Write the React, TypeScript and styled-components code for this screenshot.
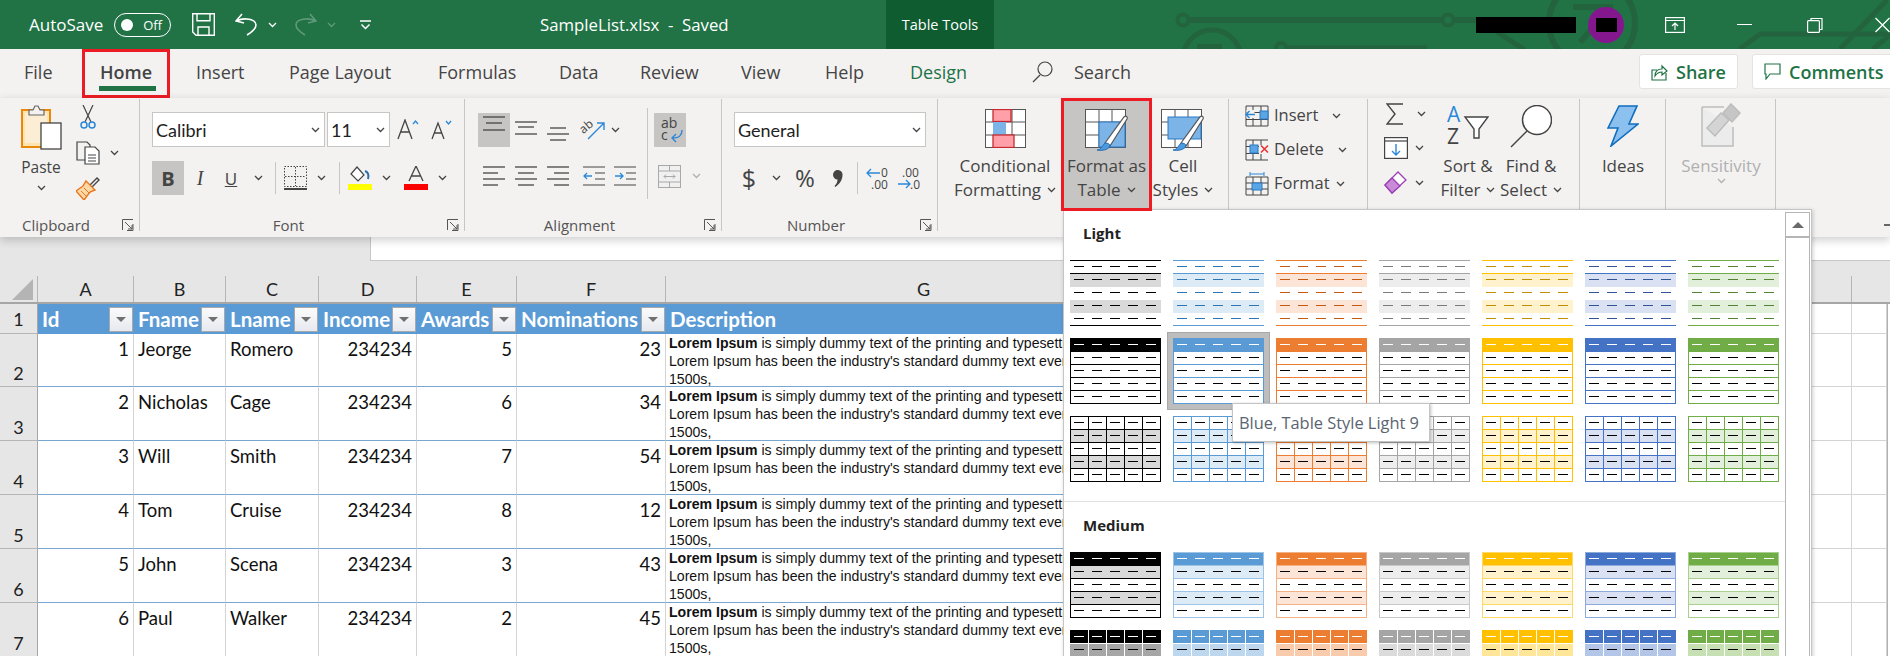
import React from "react";
import styled, { createGlobalStyle } from "styled-components";

const GlobalStyle = createGlobalStyle`
  html, body { margin: 0; padding: 0; background: #fff; overflow: hidden; }
  * { box-sizing: border-box; }
`;

const UI_FONT = `"Open Sans", "Noto Sans", sans-serif`;
const CELL_FONT = `Lato, "Open Sans", sans-serif`;
const GREEN = "#217346";
const RED = "#ed1c24";

/* ---------- small drawings ---------- */

const Chevron = ({ color = "#444" }: { color?: string }) => (
  <svg width="9" height="6" viewBox="0 0 9 6">
    <path d="M1 1l3.5 3.5L8 1" fill="none" stroke={color} strokeWidth="1.3" />
  </svg>
);

const Launcher = () => (
  <svg width="12" height="12" viewBox="0 0 12 12">
    <path d="M.5 11V.5H11M11 5v6.500H5M3 3l7 7M10 6v4H6" fill="none" stroke="#555" strokeWidth="1" />
  </svg>
);

const SaveIcon = () => (
  <svg width="23" height="23" viewBox="0 0 23 23" fill="none" stroke="#fff" strokeWidth="1.4">
    <path d="M.7.7h21.600v21.600H4L.7 19z" />
    <path d="M5 .7v7h13v-7M6 22v-8h11v8" />
  </svg>
);

const UndoIcon = ({ color }: { color: string }) => (
  <svg width="22" height="23" viewBox="0 0 22 23" fill="none" stroke={color} strokeWidth="1.6">
    <path d="M7 1L1 8l8 2M1.500 8C9 4 21 6 21 12c0 4-4 7-9 10" />
  </svg>
);

const RedoIcon = ({ color }: { color: string }) => (
  <svg width="22" height="23" viewBox="0 0 22 23" fill="none" stroke={color} strokeWidth="1.6">
    <path d="M15 1l6 7-8 2M20.500 8C13 4 1 6 1 12c0 4 4 7 9 10" />
  </svg>
);

const CustomizeIcon = () => (
  <svg width="11" height="10" viewBox="0 0 11 10" fill="none" stroke="#fff" strokeWidth="1.500">
    <path d="M0 1h11M1.500 4.500l4 4 4-4" />
  </svg>
);

const SearchIcon = () => (
  <svg width="21" height="22" viewBox="0 0 21 22" fill="none" stroke="#444" strokeWidth="1.200">
    <circle cx="13" cy="8" r="7" />
    <path d="M8 14L1 21" />
  </svg>
);

const ShareIcon = () => (
  <svg width="17" height="18" viewBox="0 0 17 18" fill="none" stroke={GREEN} strokeWidth="1.200">
    <path d="M15 10v7H1V7h5" />
    <path d="M4 13c0-5 3-7 7-7V3l5 5-5 4V9c-3 0-5 1-7 4z" />
  </svg>
);

const CommentIcon = () => (
  <svg width="17" height="17" viewBox="0 0 17 17" fill="none" stroke={GREEN} strokeWidth="1.200">
    <path d="M1 1h15v10H6l-4 5v-5H1z" />
  </svg>
);

const ScreenIcon = () => (
  <svg width="20" height="16" viewBox="0 0 20 16" fill="none" stroke="#fff" strokeWidth="1.200">
    <rect x=".6" y=".6" width="18.800" height="14.800" />
    <path d="M1 3.500h18M10 13V6M7 9l3-3 3 3" />
  </svg>
);

const RestoreIcon = () => (
  <svg width="16" height="16" viewBox="0 0 16 16" fill="none" stroke="#fff" strokeWidth="1.200">
    <rect x=".6" y="3.600" width="11.800" height="11.800" rx="1" />
    <path d="M4 3.500V1.500h11v11h-2.500" />
  </svg>
);

const CloseIcon = () => (
  <svg width="15" height="16" viewBox="0 0 15 16" fill="none" stroke="#fff" strokeWidth="1.300">
    <path d="M.5 1l14 14M14.500 1l-14 14" />
  </svg>
);

const PasteIcon = () => (
  <svg width="41" height="45" viewBox="0 0 41 45">
    <rect x="1" y="5" width="28" height="37" fill="#fde3ad" stroke="#e8890c" strokeWidth="2" />
    <rect x="4" y="8" width="22" height="30" fill="#fbeed4" />
    <path d="M8 10V5h4l2-4h3l2 4h4v5z" fill="#f3f2f1" stroke="#666" strokeWidth="1.200" />
    <rect x="20" y="18" width="20" height="26" fill="#fff" stroke="#444" strokeWidth="1.300" />
  </svg>
);

const ScissorsIcon = () => (
  <svg width="16" height="24" viewBox="0 0 16 24" fill="none">
    <path d="M3 0l8 17M13 0L5 17" stroke="#444" strokeWidth="1.200" />
    <circle cx="4" cy="20" r="3" stroke="#2b88d8" strokeWidth="1.500" />
    <circle cx="12" cy="20" r="3" stroke="#2b88d8" strokeWidth="1.500" />
  </svg>
);

const CopyIcon = () => (
  <svg width="24" height="24" viewBox="0 0 24 24" fill="#f3f2f1" stroke="#444" strokeWidth="1.200">
    <path d="M1 1h10l3 3v15H1z" />
    <path d="M9 6h10l4 4v13H9z" fill="#fff" />
    <path d="M12 14h8M12 17h8M12 20h8" />
  </svg>
);

const BrushIcon = () => (
  <svg width="24" height="23" viewBox="0 0 24 23" fill="none">
    <path d="M14 8l7-7 2 2-7 7" stroke="#444" strokeWidth="1.400" />
    <path d="M10 4l9 9-5 2-6 8-8-9 7-5z" fill="#fbd9a7" stroke="#e8761c" strokeWidth="1.400" />
    <path d="M5 14l5 5M8 11l5 5" stroke="#e8761c" strokeWidth="1" />
  </svg>
);

const GrowFont = ({ up }: { up: boolean }) => (
  <svg width="22" height="21" viewBox="0 0 22 21" fill="none">
    <path d={up ? "M1 20L8 1l7 19M4 13h8" : "M1 20L7 4l6 16M3.500 14h7"} stroke="#444" strokeWidth="1.300" />
    <path d={up ? "M16 5l2.500-3L21 5" : "M15 2l2.500 3L20 2"} stroke="#2b88d8" strokeWidth="1.300" />
  </svg>
);

const BordersIcon = () => (
  <svg width="23" height="24" viewBox="0 0 23 24" fill="none" stroke="#444">
    <rect x=".5" y=".5" width="22" height="20" strokeDasharray="1.500 1.500" />
    <path d="M11.500 1v19M1 10.500h21" strokeDasharray="1.500 1.500" />
    <path d="M0 23h23" strokeWidth="2" />
  </svg>
);

const FillIcon = () => (
  <svg width="24" height="24" viewBox="0 0 24 24" fill="none">
    <path d="M9 1l7 8-6 6-7-7z" fill="#fff" stroke="#444" strokeWidth="1.200" />
    <path d="M17 5c3 1 4 4 3 8" stroke="#2b6cb0" strokeWidth="2" />
    <rect y="18" width="24" height="6" fill="#ffff00" />
  </svg>
);

const FontColorIcon = () => (
  <svg width="24" height="24" viewBox="0 0 24 24" fill="none">
    <path d="M5 15L12 0l7 15M7.500 10h9" stroke="#444" strokeWidth="1.300" />
    <rect y="18" width="24" height="6" fill="#ff0000" />
  </svg>
);

const LinesIcon = ({ rows }: { rows: [number, number, number][] }) => (
  <svg width="22" height="34" viewBox="0 0 22 34" fill="none" stroke="#444" strokeWidth="1.300">
    {rows.map(([x, y, w]) => (
      <path key={`${x}-${y}`} d={`M${x} ${y}h${w}`} />
    ))}
  </svg>
);

const OrientationIcon = () => (
  <svg width="25" height="24" viewBox="0 0 25 24" fill="none">
    <text x="0" y="13" fontFamily={UI_FONT} fontSize="12" fill="#444" transform="rotate(-40 6 10)">ab</text>
    <path d="M8 21L24 5M17 5h7v7" stroke="#2b88d8" strokeWidth="1.400" />
  </svg>
);

const IndentIcon = ({ out }: { out: boolean }) => (
  <svg width="22" height="20" viewBox="0 0 22 20" fill="none">
    <path d="M0 1h22M12 7h10M12 13h10M0 19h22" stroke="#444" strokeWidth="1.200" />
    <path d={out ? "M9 10H1M4 7l-3 3 3 3" : "M1 10h8M6 7l3 3-3 3"} stroke="#2b88d8" strokeWidth="1.300" />
  </svg>
);

const WrapIcon = () => (
  <svg width="32" height="34" viewBox="0 0 32 34" fill="none">
    <text x="7" y="15" fontFamily={UI_FONT} fontSize="14" fill="#444">ab</text>
    <text x="7" y="27" fontFamily={UI_FONT} fontSize="14" fill="#444">c</text>
    <path d="M28 17c0 6-3 8-10 8M22 21l-4 4 4 4" stroke="#2b88d8" strokeWidth="1.400" />
  </svg>
);

const MergeIcon = () => (
  <svg width="23" height="23" viewBox="0 0 23 23" fill="#f0f0f0" stroke="#a8a8a8">
    <rect x=".5" y=".5" width="22" height="22" />
    <path d="M1 6h21M1 17h21M11.500 1v5M11.500 17v5M6 11.500h11M8 9.500l-2 2 2 2M15 9.500l2 2-2 2" fill="none" />
  </svg>
);

const CommaIcon = () => (
  <svg width="10" height="17" viewBox="0 0 10 17">
    <path d="M5 0a4.500 4.500 0 0 1 4.500 5c0 5-3 9-7 12l-1-1c2-2 3-4 3-6.500A4.500 4.500 0 0 1 5 0z" fill="#444" />
  </svg>
);

const DecimalIcon = ({ more }: { more: boolean }) => (
  <svg width="24" height="24" viewBox="0 0 24 24" fill="none">
    <text x={more ? 5 : 15} y="11" fontFamily={UI_FONT} fontSize="12" fill="#444">{more ? ".00" : "0"}</text>
    <text x={more ? 13 : 5} y="23" fontFamily={UI_FONT} fontSize="12" fill="#444">{more ? ".0" : ".00"}</text>
    <path d={more ? "M1 18h12M9 14l4 4-4 4" : "M14 7H1M5 3L1 7l4 4"} stroke="#2b88d8" strokeWidth="1.300" />
  </svg>
);

const TableBase = () => (
  <>
    <rect x=".5" y=".5" width="40" height="38" fill="#fff" stroke="#555" />
    <path d="M.5 13h40M.5 26h40M14 .5v38M27 .5v38" stroke="#555" />
  </>
);

const ConditionalIcon = () => (
  <svg width="41" height="39" viewBox="0 0 41 39">
    <TableBase />
    <rect x="8" y=".5" width="18" height="12" fill="#ffa0a8" stroke="#c8282f" strokeWidth="1.300" />
    <rect x="8" y="13" width="13" height="13" fill="#7cb4e8" />
    <rect x="8" y="26" width="21" height="12.500" fill="#ffa0a8" stroke="#c8282f" strokeWidth="1.300" />
  </svg>
);

const PaintBrush = () => (
  <>
    <path d="M20 34L39 8c2-2 4 0 3 2L25 37z" fill="#fff" stroke="#555" strokeWidth="1.200" />
    <path d="M12 41c4 0 5-4 8-7 3 0 5 1 5 3-2 4-8 5-13 4z" fill="#4a9be0" stroke="#2b6cb0" />
  </>
);

const FormatTableIcon = () => (
  <svg width="44" height="42" viewBox="0 0 44 42">
    <TableBase />
    <rect x="14" y="13" width="26" height="25" fill="#7cb4e8" stroke="#2b78c4" />
    <PaintBrush />
  </svg>
);

const CellStylesIcon = () => (
  <svg width="44" height="42" viewBox="0 0 44 42">
    <TableBase />
    <rect x="7" y="8" width="33" height="22" fill="#7cb4e8" stroke="#2b78c4" />
    <PaintBrush />
  </svg>
);

const InsertCellsIcon = () => (
  <svg width="24" height="22" viewBox="0 0 24 22" fill="none">
    <path d="M1 1h22v20H1zM8 1v20M16 1v20M1 7.500h22M1 14.500h22" stroke="#444" />
    <rect x="1.500" y="5" width="8" height="8" fill="#f3f2f1" />
    <rect x="15" y="6" width="8" height="8" fill="#5aa5e6" stroke="#2b78c4" />
    <path d="M10 9.500H1M4.500 6L1 9.500 4.500 13" stroke="#2b88d8" strokeWidth="1.500" />
  </svg>
);

const DeleteCellsIcon = () => (
  <svg width="24" height="22" viewBox="0 0 24 22" fill="none">
    <path d="M23 1H1v20h22M1 7.500h13M1 14.500h13M8 1v20M16 1v5M16 15v6" stroke="#444" />
    <rect x="5" y="6" width="8" height="8" fill="#5aa5e6" stroke="#2b78c4" />
    <path d="M16 6.500l7 7M23 6.500l-7 7" stroke="#e83030" strokeWidth="1.500" />
  </svg>
);

const FormatCellsIcon = () => (
  <svg width="24" height="24" viewBox="0 0 24 24" fill="none">
    <path d="M1 5h22v18H1zM8 5v18M16 5v18M1 11h22M1 17h22" stroke="#444" />
    <rect x="7" y="11" width="10" height="7" fill="#5aa5e6" stroke="#2b78c4" />
    <path d="M5 2h14M5 0v4M19 0v4" stroke="#2b88d8" />
  </svg>
);

const SigmaIcon = () => (
  <svg width="18" height="22" viewBox="0 0 18 22" fill="none" stroke="#444" strokeWidth="1.400">
    <path d="M17 1H1l8 10-8 10h16" />
  </svg>
);

const FillDownIcon = () => (
  <svg width="24" height="22" viewBox="0 0 24 22" fill="#fff" stroke="#444" strokeWidth="1.200">
    <rect x=".6" y=".6" width="22.800" height="20.800" />
    <path d="M1 4h22" />
    <path d="M12 7v11M8 14l4 4 4-4" stroke="#2b88d8" strokeWidth="1.400" fill="none" />
  </svg>
);

const EraserIcon = () => (
  <svg width="23" height="23" viewBox="0 0 23 23">
    <path d="M14 1l8 8-14 13-7-8z" fill="#fff" stroke="#9b3fb5" strokeWidth="1.300" />
    <path d="M1 14l7-7 8 8-8 7z" fill="#c98bd8" stroke="#9b3fb5" strokeWidth="1.300" />
  </svg>
);

const SortFilterIcon = () => (
  <svg width="42" height="40" viewBox="0 0 42 40" fill="none">
    <text x="0" y="17" fontFamily={UI_FONT} fontSize="21" fill="#2b88d8">A</text>
    <text x="0" y="39" fontFamily={UI_FONT} fontSize="21" fill="#444">Z</text>
    <path d="M18 12h23l-9 12v9h-5v-9z" stroke="#444" strokeWidth="1.400" fill="#fff" />
  </svg>
);

const FindIcon = () => (
  <svg width="42" height="43" viewBox="0 0 42 43" fill="none" stroke="#444" strokeWidth="1.500">
    <circle cx="27" cy="15" r="14.500" fill="#fff" />
    <path d="M17 26L1 42" />
  </svg>
);

const BoltIcon = () => (
  <svg width="32" height="42" viewBox="0 0 32 42">
    <path d="M12 1h18l-8 18h9L4 41l7-18H1z" fill="#8cc0ef" stroke="#106ebe" strokeWidth="1.600" />
  </svg>
);

const SensitivityIcon = () => (
  <svg width="40" height="44" viewBox="0 0 40 44" fill="none" stroke="#bdbdbd" strokeWidth="1.500">
    <path d="M1 4h22M1 4v39h31V24" fill="#ececec" />
    <path d="M6 25l14-15 8 7-14 16z" fill="#d4d4d4" />
    <path d="M22 10l8-9 9 9-8 9z" fill="#c6c6c6" />
  </svg>
);

const TitleCircuit = () => (
  <svg width="740" height="49" viewBox="0 0 740 49" fill="none" stroke="#23643f" strokeWidth="6">
    <path d="M38 20h255M303 20h27" />
    <circle cx="33" cy="20" r="5.500" strokeWidth="4" />
    <circle cx="298" cy="20" r="5.500" strokeWidth="4" />
    <circle cx="62" cy="59" r="29" strokeWidth="5" />
    <rect x="47" y="44" width="25" height="8" fill="#23643f" stroke="none" />
    <path d="M136 48h141" strokeWidth="5" />
    <circle cx="131" cy="48" r="5" strokeWidth="4" />
    <path d="M347 32l28 18" strokeWidth="5" />
    <circle cx="442" cy="23" r="43" />
    <path d="M423 7h40M430 42l25-27" />
    <path d="M590 49l20-15h130M737 0l-47 49M740 35l-17 14" strokeWidth="5" />
  </svg>
);

/* ---------- title bar ---------- */

const Page = styled.div`
  position: relative;
  width: 1890px;
  height: 656px;
  overflow: hidden;
  background: #fff;
  font-family: ${UI_FONT};
  color: #444;
`;

const TitleBar = styled.header`
  position: relative;
  display: flex;
  align-items: center;
  height: 49px;
  background: ${GREEN};
  color: #fff;
  overflow: hidden;
`;

const CircuitLayer = styled.div`
  position: absolute;
  left: 1150px;
  top: 0;
  line-height: 0;
`;

const QuickAccess = styled.div`
  position: relative;
  display: flex;
  align-items: center;
  width: 540px;
  padding-left: 29px;
`;

const AutoSaveLabel = styled.span`
  width: 85px;
  font-size: 17px;
`;

const Toggle = styled.div`
  display: flex;
  align-items: center;
  justify-content: space-between;
  width: 57px;
  height: 24px;
  padding: 0 8px 0 6px;
  border: 1px solid #fff;
  border-radius: 12px;
  font-size: 13px;
`;

const ToggleKnob = styled.span`
  width: 12px;
  height: 12px;
  border-radius: 50%;
  background: #fff;
`;

const QuickItem = styled.span<{ $ml: number }>`
  display: flex;
  margin-left: ${(p) => p.$ml}px;
`;

const DocTitle = styled.div`
  position: relative;
  width: 346px;
  font-size: 16.800px;
  white-space: pre;
`;

const ContextTab = styled.div`
  position: relative;
  display: flex;
  align-items: center;
  justify-content: center;
  width: 108px;
  height: 49px;
  background: #0f5c31;
  font-size: 14.500px;
`;

const AccountArea = styled.div`
  position: relative;
  display: flex;
  align-items: center;
  margin-left: auto;
`;

const RedactedName = styled.div`
  width: 100px;
  height: 16px;
  background: #000;
`;

const Avatar = styled.div`
  display: flex;
  align-items: center;
  justify-content: center;
  width: 36px;
  height: 36px;
  margin-left: 12px;
  border-radius: 50%;
  background: #84178e;
`;

const RedactedInitials = styled.div`
  width: 21px;
  height: 14px;
  background: #000;
`;

const WindowButtons = styled.div`
  display: flex;
  align-items: center;
  margin-left: 41px;
`;

const WindowButton = styled.span<{ $w: number }>`
  display: flex;
  align-items: center;
  width: ${(p) => p.$w}px;
`;

const MinimizeLine = styled.span`
  width: 15px;
  height: 1.500px;
  background: #fff;
`;

/* ---------- tab row ---------- */

const TabRow = styled.nav`
  display: flex;
  align-items: center;
  height: 49px;
  padding: 0 0 3px 24px;
  background: #f3f2f1;
  font-size: 18px;
  line-height: 24px;
  overflow: hidden;
`;

const Tab = styled.div<{ $w: number; $active?: boolean; $accent?: boolean }>`
  position: relative;
  flex: none;
  width: ${(p) => p.$w}px;
  color: ${(p) => (p.$accent ? GREEN : "#444")};
  font-weight: ${(p) => (p.$active ? 600 : 400)};
`;

const ActiveMark = styled.span`
  position: absolute;
  left: -18px;
  top: -11px;
  width: 88px;
  height: 49px;
  border: 3px solid ${RED};
`;

const ActiveBar = styled.span`
  position: absolute;
  left: -1px;
  top: 26px;
  width: 57px;
  height: 5px;
  background: ${GREEN};
`;

const SearchBox = styled.div`
  display: flex;
  align-items: center;
  gap: 21px;
  margin-left: 2px;
`;

const TabActions = styled.div`
  display: flex;
  gap: 14px;
  width: 251px;
  margin: -1px 0 0 auto;
  overflow: hidden;
`;

const ActionButton = styled.div<{ $w: number }>`
  display: flex;
  flex: none;
  align-items: center;
  gap: 8px;
  width: ${(p) => p.$w}px;
  height: 35px;
  padding-left: 11px;
  border: 1px solid #e4e3e1;
  border-radius: 3px;
  background: #fff;
  color: ${GREEN};
  font-size: 18px;
  font-weight: 600;
`;

/* ---------- ribbon ---------- */

const Ribbon = styled.section`
  position: relative;
  display: flex;
  height: 139px;
  padding-top: 1px;
  background: #f3f2f1;
  box-shadow: 0 3px 9px rgba(0, 0, 0, 0.2);
`;

const CollapseMark = styled.span`
  position: absolute;
  right: 0;
  top: 126px;
  width: 6px;
  height: 2px;
  background: #666;
`;

const Group = styled.div<{ $w: number }>`
  position: relative;
  display: flex;
  flex: none;
  flex-direction: column;
  width: ${(p) => p.$w}px;
  height: 132px;
  border-right: 1px solid #c8c6c4;
`;

const GroupBody = styled.div<{ $pad: string; $row?: boolean }>`
  display: flex;
  flex: 1;
  flex-direction: ${(p) => (p.$row ? "row" : "column")};
  min-height: 0;
  padding: ${(p) => p.$pad};
`;

const GroupLabel = styled.div<{ $launcher?: boolean }>`
  height: 14px;
  margin-bottom: -1px;
  padding-right: ${(p) => (p.$launcher ? 27 : 0)}px;
  color: #555;
  font-size: 15px;
  line-height: 14px;
  text-align: center;
`;

const LauncherSpot = styled.span`
  position: absolute;
  right: 5px;
  bottom: 0;
  display: flex;
`;

const PasteColumn = styled.div`
  display: flex;
  flex-direction: column;
  align-items: center;
  width: 44px;
  font-size: 15.500px;
`;

const PasteText = styled.span`
  margin-top: 7px;
  margin-bottom: 8px;
  line-height: 20px;
`;

const ClipboardSide = styled.div`
  display: flex;
  flex-direction: column;
  gap: 12px;
  margin-left: 13px;
`;

const InlineTool = styled.div<{ $gap?: number; $ml?: number }>`
  display: flex;
  align-items: center;
  gap: ${(p) => p.$gap ?? 10}px;
  margin-left: ${(p) => p.$ml ?? 0}px;
`;

const ToolRow = styled.div<{ $gap?: number; $mt?: number }>`
  display: flex;
  align-items: center;
  gap: ${(p) => p.$gap ?? 0}px;
  margin-top: ${(p) => p.$mt ?? 0}px;
`;

const Combo = styled.div<{ $w: number }>`
  display: flex;
  align-items: center;
  justify-content: space-between;
  width: ${(p) => p.$w}px;
  height: 35px;
  padding: 0 4px 0 3px;
  border: 1px solid #c8c6c4;
  background: #fff;
  color: #222;
  font-family: ${CELL_FONT};
  font-size: 18px;
`;

const ToolButton = styled.div<{ $w: number; $on?: boolean; $ml?: number }>`
  display: flex;
  flex: none;
  align-items: center;
  justify-content: center;
  width: ${(p) => p.$w}px;
  height: 34px;
  margin-left: ${(p) => p.$ml ?? 0}px;
  background: ${(p) => (p.$on ? "#c6c5c3" : "transparent")};
  color: #444;
`;

const BoldGlyph = styled.span`
  font-family: ${UI_FONT};
  font-size: 20px;
  font-weight: 700;
`;

const ItalicGlyph = styled.span`
  font-family: "Liberation Serif", serif;
  font-size: 20px;
  font-style: italic;
`;

const UnderGlyph = styled.span`
  font-size: 17px;
  text-decoration: underline;
`;

const RowDivider = styled.span<{ $h: number; $mx?: number }>`
  flex: none;
  width: 1px;
  height: ${(p) => p.$h}px;
  margin: 0 ${(p) => p.$mx ?? 0}px;
  background: #c8c6c4;
`;

const AlignColumn = styled.div<{ $w: number }>`
  display: flex;
  flex: none;
  flex-direction: column;
  gap: 12px;
  width: ${(p) => p.$w}px;
`;

const AlignDivider = styled(RowDivider)`
  margin: -5px 6px 0 0;
`;

const NumberGlyph = styled.span<{ $size: number }>`
  font-size: ${(p) => p.$size}px;
  line-height: 34px;
`;

const BigTool = styled.div<{ $w: number; $boxed?: boolean; $dim?: boolean }>`
  position: relative;
  z-index: ${(p) => (p.$boxed ? 6 : "auto")};
  display: flex;
  flex: none;
  flex-direction: column;
  align-items: center;
  width: ${(p) => p.$w}px;
  height: ${(p) => (p.$boxed ? 113 : 110)}px;
  margin-top: ${(p) => (p.$boxed ? -1 : 0)}px;
  padding-top: ${(p) => (p.$boxed ? 4 : 6)}px;
  border: ${(p) => (p.$boxed ? `3px solid ${RED}` : "none")};
  background: ${(p) => (p.$boxed ? "#c6c5c3" : "transparent")};
  color: ${(p) => (p.$dim ? "#b0b0b0" : "#444")};
  font-size: 17px;
  line-height: 24px;
`;

const BigIconSlot = styled.div<{ $top?: number }>`
  display: flex;
  align-items: flex-start;
  justify-content: center;
  height: ${(p) => 49 - (p.$top ?? 0)}px;
  margin-top: ${(p) => p.$top ?? 0}px;
`;

const BigLine = styled.div`
  display: flex;
  align-items: center;
  gap: 6px;
  white-space: nowrap;
`;

const StackColumn = styled.div`
  display: flex;
  flex: none;
  flex-direction: column;
  gap: 12px;
  width: 56px;
  padding-top: 4px;
`;

const CellsRow = styled.div`
  display: flex;
  align-items: center;
  height: 34px;
  font-size: 16.500px;
  line-height: 20px;
`;

const CellsIconSlot = styled.span`
  display: flex;
  width: 24px;
`;

const CellsText = styled.span<{ $w: number }>`
  width: ${(p) => p.$w}px;
  margin-left: 5px;
  margin-top: -2px;
`;

/* ---------- sheet ---------- */

const COLUMNS = "38px 96px 92px 93px 98px 100px 149px 516px 670px 35px 1fr";

const FormulaArea = styled.div`
  display: flex;
  height: 24px;
  background: #e6e6e6;
`;

const FormulaInput = styled.div`
  flex: 1;
  margin-left: 370px;
  border-left: 1px solid #c6c6c6;
  border-bottom: 1px solid #c6c6c6;
  background: #fff;
`;

const HeaderGap = styled.div`
  height: 15px;
  background: #e6e6e6;
`;

const ColumnHeader = styled.div`
  display: grid;
  grid-template-columns: ${COLUMNS};
  height: 28px;
  background: #e6e6e6;
  border-bottom: 2px solid #a6a6a6;
  font-family: ${CELL_FONT};
  font-size: 18px;
  line-height: 26px;
  color: #222;
  text-align: center;
`;

const ColumnName = styled.div`
  border-right: 1px solid #b6b6b6;
  &:nth-last-child(-n + 2) { border-right: none; }
`;

const CornerWrap = styled.div`
  display: flex;
  align-items: flex-end;
  justify-content: flex-end;
  padding: 0 4px 2px 0;
  border-right: 1px solid #b6b6b6;
`;

const CornerMark = styled.span`
  width: 21px;
  height: 21px;
  background: #b4b4b4;
  clip-path: polygon(100% 0, 100% 100%, 0 100%);
`;

const SheetRow = styled.div<{ $h: number }>`
  display: grid;
  grid-template-columns: ${COLUMNS};
  height: ${(p) => p.$h}px;
`;

const RowLabel = styled.div<{ $middle?: boolean }>`
  display: flex;
  align-items: ${(p) => (p.$middle ? "center" : "flex-end")};
  justify-content: center;
  padding-bottom: ${(p) => (p.$middle ? 0 : 1)}px;
  border-right: 1px solid #a6a6a6;
  border-bottom: 1px solid #b6b6b6;
  background: #e6e6e6;
  color: #222;
  font-family: ${CELL_FONT};
  font-size: 18px;
  line-height: 24px;
`;

const HeadCell = styled.div`
  display: flex;
  align-items: center;
  justify-content: space-between;
  padding: 0 1px 0 4px;
  background: #5b9bd5;
  color: #fff;
  font-family: ${CELL_FONT};
  font-size: 20.500px;
  font-weight: 700;
  overflow: hidden;
  white-space: nowrap;
`;

const FilterButton = styled.span`
  display: flex;
  flex: none;
  align-items: center;
  justify-content: center;
  width: 24px;
  height: 25px;
  border: 1px solid #a9a9a9;
  background: linear-gradient(#fbfbfc, #e6e9ef);
  &::after {
    content: "";
    border-top: 5px solid #707070;
    border-left: 5px solid transparent;
    border-right: 5px solid transparent;
  }
`;

const DataCell = styled.div<{ $right?: boolean; $plain?: boolean }>`
  padding: 0 4px;
  border-right: 1px solid #d4d4d4;
  border-bottom: 1px solid ${(p) => (p.$plain ? "#d4d4d4" : "#78a7d2")};
  background: #fff;
  color: #111;
  font-family: ${CELL_FONT};
  font-size: 18.500px;
  line-height: 30px;
  text-align: ${(p) => (p.$right ? "right" : "left")};
  overflow: hidden;
  white-space: nowrap;
`;

const EdgeCell = styled.div`
  border-left: 1px solid #b0b0b0;
  background: #fff;
`;

const DescriptionCell = styled(DataCell)`
  padding: 0 0 0 3px;
  font-family: "Liberation Sans", Arial, sans-serif;
  font-size: 14.100px;
  line-height: 18px;
`;

/* ---------- styles dropdown ---------- */

const Gallery = styled.aside`
  position: absolute;
  left: 1063px;
  top: 209px;
  z-index: 5;
  display: flex;
  width: 749px;
  height: 460px;
  border: 1px solid #c6c6c6;
  background: #fff;
  box-shadow: 1px 1px 4px rgba(0, 0, 0, 0.2);
`;

const GalleryMain = styled.div`
  width: 721px;
`;

const SectionTitle = styled.div`
  height: 50px;
  padding-left: 19px;
  color: #222;
  font-size: 15px;
  font-weight: 700;
  line-height: 46px;
`;

const SwatchGrid = styled.div`
  display: grid;
  grid-template-columns: repeat(7, 91px);
  gap: 12px;
  padding-left: 6px;
`;

const SwatchBox = styled.div<{ $picked?: boolean }>`
  width: 91px;
  height: 66px;
  line-height: 0;
  box-shadow: ${(p) => (p.$picked ? "0 0 0 5px #bdbdbd, 0 0 0 6px #a8a8a8" : "none")};
`;

const SectionDivider = styled.div`
  height: 1px;
  margin-top: 19px;
  background: #e1e1e1;
`;

const ScrollTrack = styled.div`
  width: 25px;
  margin-top: 2px;
  border-left: 1px solid #b5b5b5;
  border-right: 1px solid #b5b5b5;
  border-top: 1px solid #b5b5b5;
`;

const ScrollUp = styled.div`
  display: flex;
  align-items: center;
  justify-content: center;
  height: 25px;
  border-bottom: 2px solid #b5b5b5;
  &::after {
    content: "";
    border-bottom: 6px solid #6a6a6a;
    border-left: 6px solid transparent;
    border-right: 6px solid transparent;
  }
`;

const Tooltip = styled.div`
  position: absolute;
  left: 168px;
  top: 193px;
  z-index: 2;
  display: flex;
  align-items: center;
  justify-content: center;
  width: 198px;
  height: 39px;
  padding-right: 4px;
  border: 1px solid #c4c4c4;
  background: #fff;
  box-shadow: 1px 1px 3px rgba(0, 0, 0, 0.25);
  color: #5a6470;
  font-size: 16.400px;
  white-space: nowrap;
`;

/* ---------- data ---------- */

type Tone = { main: string; soft: string; strong: string; band: string; dash: string };

const TONES: Tone[] = [
  { main: "#000000", soft: "#000000", strong: "#a6a6a6", band: "#d9d9d9", dash: "#000000" },
  { main: "#5b9bd5", soft: "#9dc3e6", strong: "#bdd7ee", band: "#ddebf7", dash: "#2e75b6" },
  { main: "#ed7d31", soft: "#f4b183", strong: "#f8cbad", band: "#fce4d6", dash: "#c65911" },
  { main: "#a5a5a5", soft: "#c9c9c9", strong: "#dbdbdb", band: "#ededed", dash: "#7b7b7b" },
  { main: "#ffc000", soft: "#ffd966", strong: "#ffe699", band: "#fff2cc", dash: "#bf8f00" },
  { main: "#4472c4", soft: "#8eaadb", strong: "#b4c6e7", band: "#d9e1f2", dash: "#305496" },
  { main: "#70ad47", soft: "#a9d08e", strong: "#c6e0b4", band: "#e2efda", dash: "#548235" },
];

type SwatchKind = "lines" | "boxed" | "grid" | "medium" | "solid";

const ROW_TOPS = [0, 14, 27, 40, 53, 66];
const COL_LEFTS = [0, 18, 36, 54, 72, 91];
const INDEXES = [0, 1, 2, 3, 4];

const Swatch = ({ kind, tone }: { kind: SwatchKind; tone: Tone }) => {
  const lineColor = kind === "medium" ? tone.soft : tone.main;
  const isBand = (r: number) => r === 1 || r === 3;
  const dashColor = (r: number) => {
    if (kind === "lines") return tone.dash;
    if ((kind === "boxed" || kind === "medium" || kind === "solid") && r === 0) return "#fff";
    return "#000";
  };
  return (
    <svg width="91" height="66" viewBox="0 0 91 66" shapeRendering="crispEdges">
      {INDEXES.map((r) => {
        let fill = "#fff";
        if (r === 0 && kind !== "lines" && kind !== "grid") fill = tone.main;
        else if (kind === "solid") fill = isBand(r) ? tone.strong : tone.band;
        else if (isBand(r) && kind !== "boxed") fill = tone.band;
        return <rect key={r} x="0" y={ROW_TOPS[r]} width="91" height={ROW_TOPS[r + 1] - ROW_TOPS[r]} fill={fill} />;
      })}
      {kind === "lines" && (
        <path d="M0 .5h91M0 13.500h91M0 65.500h91" stroke={tone.main} fill="none" />
      )}
      {(kind === "boxed" || kind === "medium" || kind === "grid") && (
        <>
          <path
            d={ROW_TOPS.slice(1, 5).map((y) => `M0 ${y - 0.5}h91`).join("")}
            stroke={lineColor}
            fill="none"
          />
          <rect x=".5" y=".5" width="90" height="65" stroke={lineColor} fill="none" />
        </>
      )}
      {kind === "grid" && (
        <path d={COL_LEFTS.slice(1, 5).map((x) => `M${x + 0.5} 0v66`).join("")} stroke={lineColor} fill="none" />
      )}
      {kind === "solid" && (
        <path
          d={
            COL_LEFTS.slice(1, 5).map((x) => `M${x + 0.5} 0v66`).join("") +
            ROW_TOPS.slice(1, 5).map((y) => `M0 ${y - 0.5}h91`).join("")
          }
          stroke="#fff"
          fill="none"
        />
      )}
      {INDEXES.map((r) =>
        INDEXES.map((c) => (
          <rect key={`${r}-${c}`} x={4 + 18 * c} y={6 + 13 * r} width="10" height="1" fill={dashColor(r)} />
        ))
      )}
    </svg>
  );
};

const TABS = [
  { name: "File", w: 76 },
  { name: "Home", w: 96, active: true },
  { name: "Insert", w: 93 },
  { name: "Page Layout", w: 149 },
  { name: "Formulas", w: 121 },
  { name: "Data", w: 81 },
  { name: "Review", w: 101 },
  { name: "View", w: 84 },
  { name: "Help", w: 85 },
  { name: "Design", w: 120, accent: true },
];

const HEAD = ["Id", "Fname", "Lname", "Income", "Awards", "Nominations"];

const PEOPLE = [
  { id: 1, first: "Jeorge", last: "Romero", awards: 5, noms: 23, h: 53 },
  { id: 2, first: "Nicholas", last: "Cage", awards: 6, noms: 34, h: 54 },
  { id: 3, first: "Will", last: "Smith", awards: 7, noms: 54, h: 54 },
  { id: 4, first: "Tom", last: "Cruise", awards: 8, noms: 12, h: 54 },
  { id: 5, first: "John", last: "Scena", awards: 3, noms: 43, h: 54 },
  { id: 6, first: "Paul", last: "Walker", awards: 2, noms: 45, h: 54 },
];

const LIGHT_KINDS: SwatchKind[] = ["lines", "boxed", "grid"];
const MEDIUM_KINDS: SwatchKind[] = ["medium", "solid"];

const App = () => (
  <Page>
    <GlobalStyle />
    <TitleBar>
      <CircuitLayer>
        <TitleCircuit />
      </CircuitLayer>
      <QuickAccess>
        <AutoSaveLabel>AutoSave</AutoSaveLabel>
        <Toggle>
          <ToggleKnob />
          Off
        </Toggle>
        <QuickItem $ml={21}><SaveIcon /></QuickItem>
        <QuickItem $ml={20}><UndoIcon color="#fff" /></QuickItem>
        <QuickItem $ml={11}><Chevron color="#fff" /></QuickItem>
        <QuickItem $ml={18}><RedoIcon color="#5f9a7a" /></QuickItem>
        <QuickItem $ml={10}><Chevron color="#5f9a7a" /></QuickItem>
        <QuickItem $ml={24}><CustomizeIcon /></QuickItem>
      </QuickAccess>
      <DocTitle>SampleList.xlsx  -  Saved</DocTitle>
      <ContextTab>Table Tools</ContextTab>
      <AccountArea>
        <RedactedName />
        <Avatar><RedactedInitials /></Avatar>
        <WindowButtons>
          <WindowButton $w={72}><ScreenIcon /></WindowButton>
          <WindowButton $w={70}><MinimizeLine /></WindowButton>
          <WindowButton $w={68}><RestoreIcon /></WindowButton>
          <WindowButton $w={15}><CloseIcon /></WindowButton>
        </WindowButtons>
      </AccountArea>
    </TitleBar>

    <TabRow>
      {TABS.map((t) => (
        <Tab key={t.name} $w={t.w} $active={t.active} $accent={t.accent}>
          {t.name}
          {t.active && <ActiveMark />}
          {t.active && <ActiveBar />}
        </Tab>
      ))}
      <SearchBox>
        <SearchIcon />
        Search
      </SearchBox>
      <TabActions>
        <ActionButton $w={99}><ShareIcon />Share</ActionButton>
        <ActionButton $w={150}><CommentIcon />Comments</ActionButton>
      </TabActions>
    </TabRow>

    <Ribbon>
      <Group $w={140}>
        <GroupBody $pad="6px 0 0 19px" $row>
          <PasteColumn>
            <PasteIcon />
            <PasteText>Paste</PasteText>
            <Chevron />
          </PasteColumn>
          <ClipboardSide>
            <InlineTool $ml={4}><ScissorsIcon /></InlineTool>
            <InlineTool><CopyIcon /><Chevron /></InlineTool>
            <InlineTool><BrushIcon /></InlineTool>
          </ClipboardSide>
        </GroupBody>
        <GroupLabel $launcher>Clipboard</GroupLabel>
        <LauncherSpot><Launcher /></LauncherSpot>
      </Group>

      <Group $w={325}>
        <GroupBody $pad="13px 0 0 12px">
          <ToolRow $gap={2}>
            <Combo $w={173}>Calibri<Chevron /></Combo>
            <Combo $w={63}>11<Chevron /></Combo>
            <ToolButton $w={22} $ml={5}><GrowFont up /></ToolButton>
            <ToolButton $w={22} $ml={10}><GrowFont up={false} /></ToolButton>
          </ToolRow>
          <ToolRow $mt={14}>
            <ToolButton $w={32} $on><BoldGlyph>B</BoldGlyph></ToolButton>
            <ToolButton $w={10} $ml={11}><ItalicGlyph>I</ItalicGlyph></ToolButton>
            <ToolButton $w={12} $ml={20}><UnderGlyph>U</UnderGlyph></ToolButton>
            <ToolButton $w={9} $ml={17}><Chevron /></ToolButton>
            <RowDivider $h={32} $mx={12} />
            <ToolButton $w={23} $ml={-4}><BordersIcon /></ToolButton>
            <ToolButton $w={9} $ml={10}><Chevron /></ToolButton>
            <RowDivider $h={32} $mx={13} />
            <ToolButton $w={24} $ml={-5}><FillIcon /></ToolButton>
            <ToolButton $w={9} $ml={10}><Chevron /></ToolButton>
            <ToolButton $w={24} $ml={13}><FontColorIcon /></ToolButton>
            <ToolButton $w={9} $ml={10}><Chevron /></ToolButton>
          </ToolRow>
        </GroupBody>
        <GroupLabel $launcher>Font</GroupLabel>
        <LauncherSpot><Launcher /></LauncherSpot>
      </Group>

      <Group $w={257}>
        <GroupBody $pad="14px 0 0 13px" $row>
          <AlignColumn $w={169}>
            <ToolRow>
              <ToolButton $w={32} $on><LinesIcon rows={[[0, 4, 22], [3, 10, 16], [0, 17, 22]]} /></ToolButton>
              <ToolButton $w={22} $ml={5}><LinesIcon rows={[[0, 9, 22], [3, 14, 16], [0, 21, 22]]} /></ToolButton>
              <ToolButton $w={22} $ml={10}><LinesIcon rows={[[3, 15, 16], [0, 21, 22], [3, 27, 16]]} /></ToolButton>
              <ToolButton $w={25} $ml={11}><OrientationIcon /></ToolButton>
              <ToolButton $w={9} $ml={6}><Chevron /></ToolButton>
            </ToolRow>
            <ToolRow>
              <ToolButton $w={22} $ml={5}><LinesIcon rows={[[0, 8, 22], [0, 14, 15], [0, 20, 22], [0, 26, 15]]} /></ToolButton>
              <ToolButton $w={22} $ml={10}><LinesIcon rows={[[0, 8, 22], [3, 14, 16], [0, 20, 22], [3, 26, 16]]} /></ToolButton>
              <ToolButton $w={22} $ml={10}><LinesIcon rows={[[0, 8, 22], [7, 14, 15], [0, 20, 22], [7, 26, 15]]} /></ToolButton>
              <ToolButton $w={22} $ml={14}><IndentIcon out /></ToolButton>
              <ToolButton $w={22} $ml={9}><IndentIcon out={false} /></ToolButton>
            </ToolRow>
          </AlignColumn>
          <AlignDivider $h={91} />
          <AlignColumn $w={60}>
            <ToolRow>
              <ToolButton $w={32} $on><WrapIcon /></ToolButton>
            </ToolRow>
            <ToolRow>
              <ToolButton $w={23} $ml={4}><MergeIcon /></ToolButton>
              <ToolButton $w={9} $ml={11}><Chevron color="#b0b0b0" /></ToolButton>
            </ToolRow>
          </AlignColumn>
        </GroupBody>
        <GroupLabel $launcher>Alignment</GroupLabel>
        <LauncherSpot><Launcher /></LauncherSpot>
      </Group>

      <Group $w={216}>
        <GroupBody $pad="13px 0 0 12px">
          <Combo $w={192}>General<Chevron /></Combo>
          <ToolRow $mt={14}>
            <ToolButton $w={12} $ml={9}><NumberGlyph $size={25}>$</NumberGlyph></ToolButton>
            <ToolButton $w={9} $ml={17}><Chevron /></ToolButton>
            <ToolButton $w={22} $ml={13}><NumberGlyph $size={24}>%</NumberGlyph></ToolButton>
            <ToolButton $w={10} $ml={17}><CommaIcon /></ToolButton>
            <RowDivider $h={32} $mx={14} />
            <ToolButton $w={24} $ml={-6}><DecimalIcon more={false} /></ToolButton>
            <ToolButton $w={24} $ml={7}><DecimalIcon more /></ToolButton>
          </ToolRow>
        </GroupBody>
        <GroupLabel $launcher>Number</GroupLabel>
        <LauncherSpot><Launcher /></LauncherSpot>
      </Group>

      <Group $w={291}>
        <GroupBody $pad="0 0 0 11px" $row>
          <BigTool $w={112}>
            <BigIconSlot $top={4}><ConditionalIcon /></BigIconSlot>
            <BigLine>Conditional</BigLine>
            <BigLine>Formatting <Chevron /></BigLine>
          </BigTool>
          <BigTool $w={91} $boxed>
            <BigIconSlot $top={4}><FormatTableIcon /></BigIconSlot>
            <BigLine>Format as</BigLine>
            <BigLine>Table <Chevron /></BigLine>
          </BigTool>
          <BigTool $w={62}>
            <BigIconSlot $top={4}><CellStylesIcon /></BigIconSlot>
            <BigLine>Cell</BigLine>
            <BigLine>Styles <Chevron /></BigLine>
          </BigTool>
        </GroupBody>
        <GroupLabel>Styles</GroupLabel>
      </Group>

      <Group $w={139}>
        <GroupBody $pad="0 0 0 16px">
          <CellsRow><CellsIconSlot><InsertCellsIcon /></CellsIconSlot><CellsText $w={58}>Insert</CellsText><Chevron /></CellsRow>
          <CellsRow><CellsIconSlot><DeleteCellsIcon /></CellsIconSlot><CellsText $w={64}>Delete</CellsText><Chevron /></CellsRow>
          <CellsRow><CellsIconSlot><FormatCellsIcon /></CellsIconSlot><CellsText $w={62}>Format</CellsText><Chevron /></CellsRow>
        </GroupBody>
        <GroupLabel>Cells</GroupLabel>
      </Group>

      <Group $w={212}>
        <GroupBody $pad="0 0 0 16px" $row>
          <StackColumn>
            <InlineTool $gap={13} $ml={2}><SigmaIcon /><Chevron /></InlineTool>
            <InlineTool $gap={7}><FillDownIcon /><Chevron /></InlineTool>
            <InlineTool $gap={8}><EraserIcon /><Chevron /></InlineTool>
          </StackColumn>
          <BigTool $w={56}>
            <BigIconSlot><SortFilterIcon /></BigIconSlot>
            <BigLine>Sort &amp;</BigLine>
            <BigLine>Filter <Chevron /></BigLine>
          </BigTool>
          <BigTool $w={70}>
            <BigIconSlot><FindIcon /></BigIconSlot>
            <BigLine>Find &amp;</BigLine>
            <BigLine>Select <Chevron /></BigLine>
          </BigTool>
        </GroupBody>
        <GroupLabel>Editing</GroupLabel>
      </Group>

      <Group $w={86}>
        <GroupBody $pad="0" $row>
          <BigTool $w={86}>
            <BigIconSlot><BoltIcon /></BigIconSlot>
            <BigLine>Ideas</BigLine>
          </BigTool>
        </GroupBody>
        <GroupLabel>Ideas</GroupLabel>
      </Group>

      <Group $w={110}>
        <GroupBody $pad="0" $row>
          <BigTool $w={110} $dim>
            <BigIconSlot $top={-2}><SensitivityIcon /></BigIconSlot>
            <BigLine>Sensitivity</BigLine>
            <Chevron color="#b0b0b0" />
          </BigTool>
        </GroupBody>
        <GroupLabel>Sensitivity</GroupLabel>
      </Group>
      <CollapseMark />
    </Ribbon>

    <FormulaArea>
      <FormulaInput />
    </FormulaArea>
    <HeaderGap />
    <ColumnHeader>
      <CornerWrap><CornerMark /></CornerWrap>
      {["A", "B", "C", "D", "E", "F", "G", "", "", ""].map((c, i) => (
        <ColumnName key={`${c}${i}`}>{c}</ColumnName>
      ))}
    </ColumnHeader>

    <SheetRow $h={30}>
      <RowLabel $middle>1</RowLabel>
      {HEAD.map((h) => (
        <HeadCell key={h}>{h}<FilterButton /></HeadCell>
      ))}
      <HeadCell>Description</HeadCell>
      <DataCell $plain />
      <DataCell $plain />
      <EdgeCell />
    </SheetRow>
    {PEOPLE.map((p, i) => (
      <SheetRow key={p.id} $h={p.h}>
        <RowLabel>{i + 2}</RowLabel>
        <DataCell $right>{p.id}</DataCell>
        <DataCell>{p.first}</DataCell>
        <DataCell>{p.last}</DataCell>
        <DataCell $right>234234</DataCell>
        <DataCell $right>{p.awards}</DataCell>
        <DataCell $right>{p.noms}</DataCell>
        <DescriptionCell>
          <b>Lorem Ipsum</b> is simply dummy text of the printing and typesetting industry.
          <br />
          Lorem Ipsum has been the industry's standard dummy text ever since the
          <br />
          1500s,
        </DescriptionCell>
        <DataCell $plain />
        <DataCell $plain />
        <EdgeCell />
      </SheetRow>
    ))}

    <Gallery>
      <GalleryMain>
        <SectionTitle>Light</SectionTitle>
        <SwatchGrid>
          {LIGHT_KINDS.map((kind) =>
            TONES.map((tone, i) => (
              <SwatchBox key={`${kind}${i}`} $picked={kind === "boxed" && i === 1}>
                <Swatch kind={kind} tone={tone} />
              </SwatchBox>
            ))
          )}
        </SwatchGrid>
        <SectionDivider />
        <SectionTitle>Medium</SectionTitle>
        <SwatchGrid>
          {MEDIUM_KINDS.map((kind) =>
            TONES.map((tone, i) => (
              <SwatchBox key={`${kind}${i}`}>
                <Swatch kind={kind} tone={tone} />
              </SwatchBox>
            ))
          )}
        </SwatchGrid>
      </GalleryMain>
      <ScrollTrack>
        <ScrollUp />
      </ScrollTrack>
      <Tooltip>Blue, Table Style Light 9</Tooltip>
    </Gallery>
  </Page>
);

export default App;
